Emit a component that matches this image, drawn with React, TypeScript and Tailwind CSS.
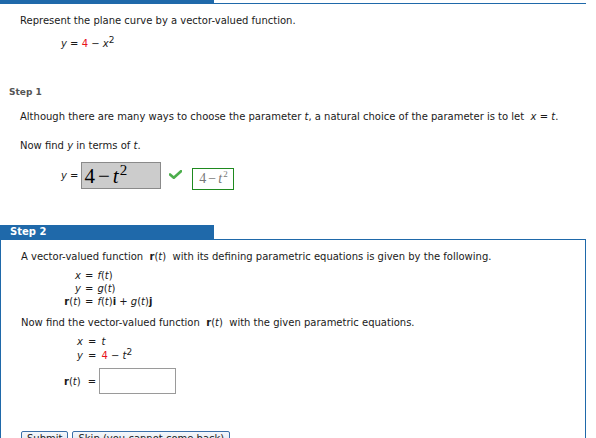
import React from "react";

const I = ({ children }: { children: React.ReactNode }) => <i className="italic">{children}</i>;
const B = ({ children }: { children: React.ReactNode }) => <b className="font-bold">{children}</b>;
const Red = ({ children }: { children: React.ReactNode }) => <span className="text-[#e8121b]">{children}</span>;
const Sup = ({ children }: { children: React.ReactNode }) => (
  <sup className="relative -top-[4px] text-[9px] leading-none align-baseline">{children}</sup>
);
const R = () => (
  <span>
    <B>r</B>(<I>t</I>)
  </span>
);

function Check() {
  return (
    <svg width="13" height="9" viewBox="0 0 13 9">
      <path d="M1 4.5 L4.8 7.8 L12 1.2" fill="none" stroke="#4cae4c" strokeWidth="2.6" strokeLinecap="round" strokeLinejoin="round" />
    </svg>
  );
}

export default function App() {
  return (
    <div
      className="relative w-[596px] h-[438px] overflow-hidden bg-white text-[#1a1a1a] text-[10px] leading-[13px] font-['DejaVu_Sans',Verdana,sans-serif]"
    >
      {/* top bar */}
      <div className="flex items-end h-[4px]">
        <div className="w-[214px] h-[4px] bg-[#1f69aa]" />
        <div className="w-[372px] h-px bg-[#1f69aa]" />
      </div>

      <div className="pl-[20px] pt-[10px]">Represent the plane curve by a vector-valued function.</div>
      <div className="pl-[61px] pt-[10px]">
        <I>y</I> = <Red>4</Red> − <I>x</I>
        <Sup>2</Sup>
      </div>

      <div className="pl-[9px] pt-[36px] text-[9px] font-bold text-[#555]">Step 1</div>
      <div className="pl-[20px] pt-[11px]">
        Although there are many ways to choose the parameter <I>t</I>, a natural choice of the parameter is to let&nbsp; <I>x</I> = <I>t</I>.
      </div>
      <div className="pl-[20px] pt-[16px]">
        Now find <I>y</I> in terms of <I>t</I>.
      </div>

      <div className="flex items-center pl-[61px] pt-[8px]">
        <span className="mr-[3px]">
          <I>y</I> =
        </span>
        <div className="w-[80px] h-[27px] border border-[#8a8a8a] bg-[#cccccc] pl-[2px] text-[21px] leading-[27px] text-black whitespace-nowrap font-['Liberation_Serif','DejaVu_Serif',serif]">
          4<span className="mx-[3px]">−</span><i>t</i>
          <sup className="relative -top-[8px] ml-[1px] text-[15px] leading-none align-baseline">2</sup>
        </div>
        <div className="ml-[8px] mt-[-2px]">
          <Check />
        </div>
        <div className="ml-[10px] mt-[8px] w-[42px] h-[22px] border-[1.5px] border-[#1f8a1f] text-[14px] leading-[20px] text-[#777] text-center whitespace-nowrap font-['Liberation_Serif','DejaVu_Serif',serif]">
          4<span className="mx-[2px]">−</span><i>t</i>
          <sup className="relative -top-[6px] ml-[1px] text-[9px] leading-none align-baseline">2</sup>
        </div>
      </div>

      {/* Step 2 */}
      <div className="mt-[35px] w-[214px] h-[14px] bg-[#1f69aa] pl-[10px] text-white font-bold text-[10px] leading-[14px]">
        Step 2
      </div>
      <div className="w-[586px] h-[300px] border border-[#1f69aa]">
        <div className="pl-[20px] pt-[10px]">
          A vector-valued function&nbsp; <R />&nbsp; with its defining parametric equations is given by the following.
        </div>

        <div className="grid grid-cols-[17px_auto_1fr] ml-[63px] mt-[6px] leading-[13px]">
          <div className="text-right"><I>x</I></div>
          <div className="px-[4px]">=</div>
          <div><I>f</I>(<I>t</I>)</div>
          <div className="text-right"><I>y</I></div>
          <div className="px-[4px]">=</div>
          <div><I>g</I>(<I>t</I>)</div>
          <div className="text-right"><R /></div>
          <div className="px-[4px]">=</div>
          <div>
            <I>f</I>(<I>t</I>)<B>i</B> + <I>g</I>(<I>t</I>)<B>j</B>
          </div>
        </div>

        <div className="pl-[20px] pt-[8px]">
          Now find the vector-valued function&nbsp; <R />&nbsp; with the given parametric equations.
        </div>

        <div className="grid grid-cols-[19px_auto_1fr] ml-[63px] mt-[6px] leading-[14px]">
          <div className="text-right"><I>x</I></div>
          <div className="px-[5px]">=</div>
          <div><I>t</I></div>
          <div className="text-right"><I>y</I></div>
          <div className="px-[5px]">=</div>
          <div>
            <Red>4</Red> − <I>t</I>
            <Sup>2</Sup>
          </div>
        </div>

        <div className="flex items-center ml-[63px] mt-[5px]">
          <R />
          <span className="ml-[7px] mr-[3px]">=</span>
          <div className="w-[77px] h-[26px] border border-[#9a9a9a] bg-white" />
        </div>

        <div className="flex gap-[4px] ml-[20px] mt-[37px]">
          <div className="h-[16px] px-[5px] border border-[#3b6fa8] rounded-[2px] bg-gradient-to-b from-[#f4f7fb] to-[#d9e3ef] text-[10px] leading-[14px] text-[#222]">
            Submit
          </div>
          <div className="h-[16px] px-[5px] border border-[#3b6fa8] rounded-[2px] bg-gradient-to-b from-[#f4f7fb] to-[#d9e3ef] text-[10px] leading-[14px] text-[#222]">
            Skip (you cannot come back)
          </div>
        </div>
      </div>
    </div>
  );
}
